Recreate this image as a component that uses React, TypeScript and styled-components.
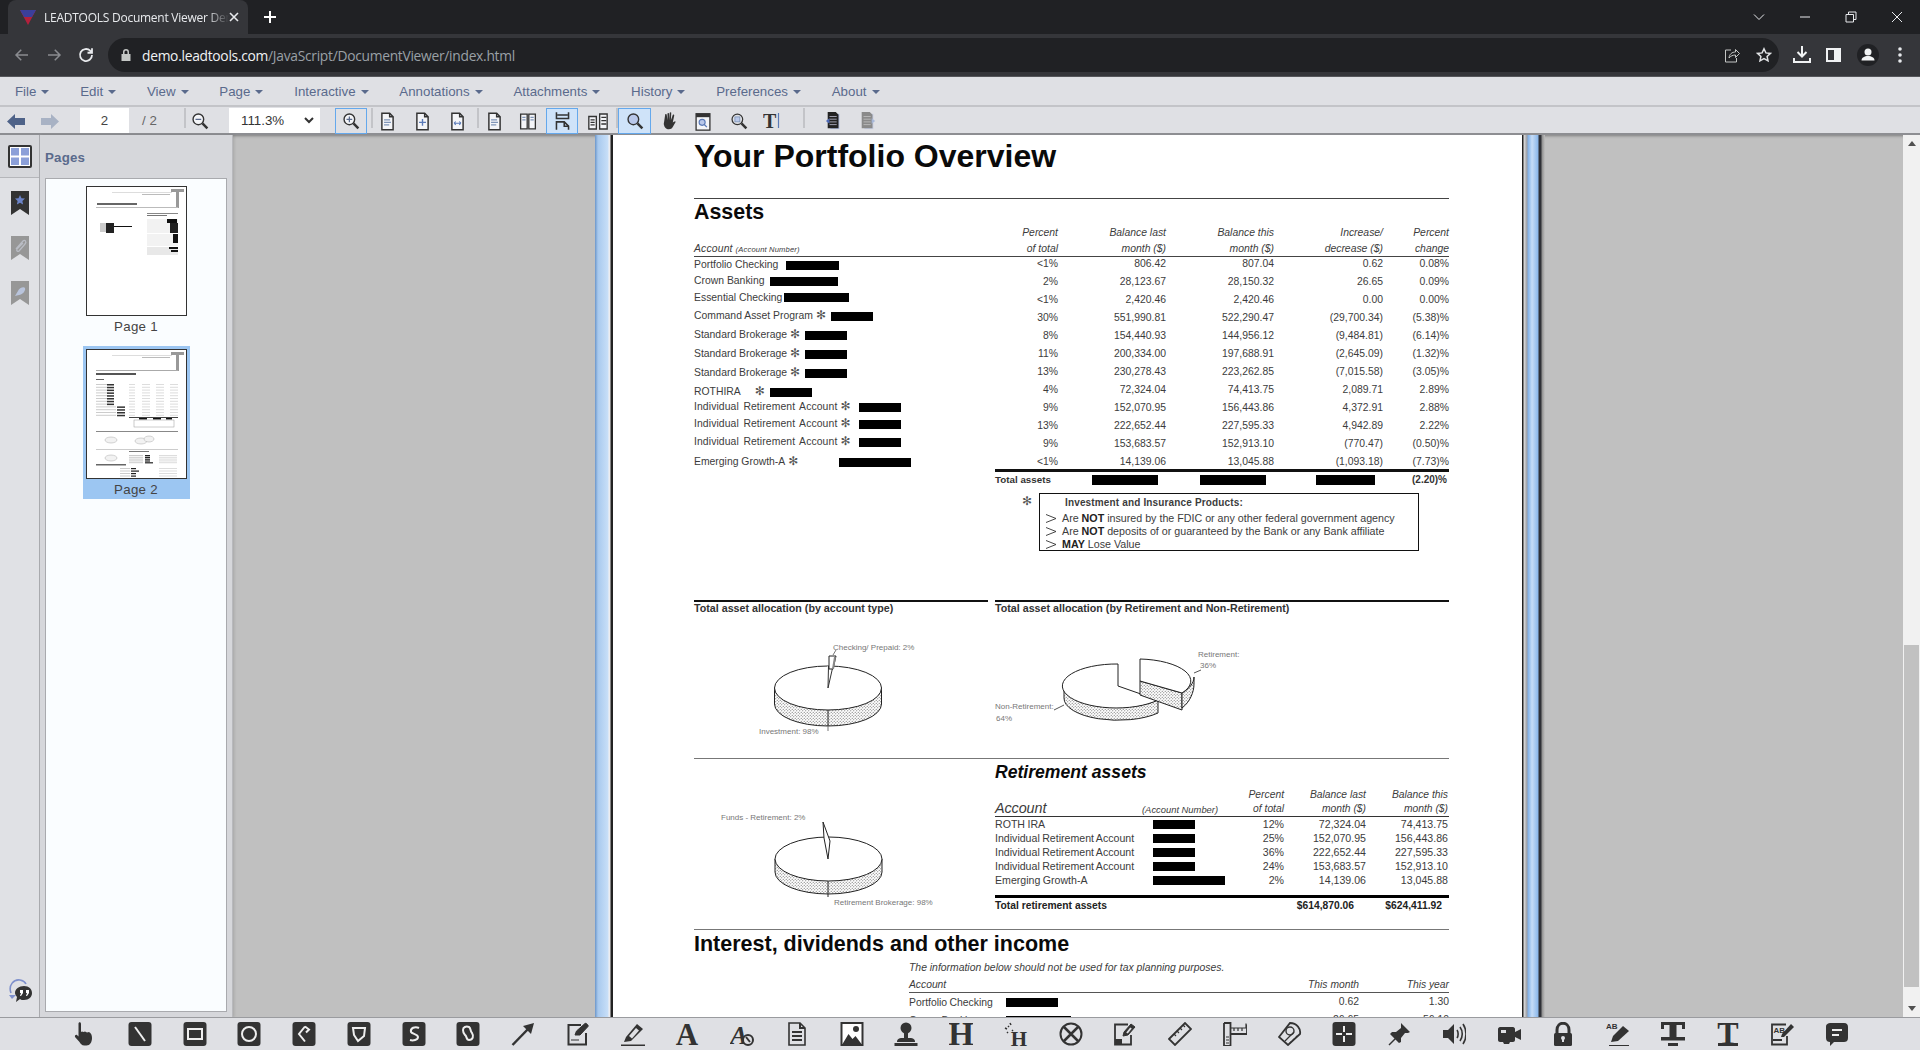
import React from 'react';
import styled, { createGlobalStyle } from 'styled-components';

const Global = createGlobalStyle`
  html, body { margin: 0; padding: 0; height: 1050px; overflow: hidden; background: #c0c0c0; }
  #root { height: 1050px; }
  * { box-sizing: border-box; }
`;

const AppRoot = styled.div`
  width: 1920px; height: 1050px; display: flex; flex-direction: column;
  font-family: "Liberation Sans", Arial, sans-serif; overflow: hidden;
`;

/* ---------- browser chrome ---------- */
const TabStrip = styled.div`
  height: 34px; background: #202124; display: flex; align-items: stretch; padding-left: 8px;
`;
const Tab = styled.div`
  width: 240px; background: #35363a; border-radius: 8px 8px 0 0; display: flex; align-items: center;
  padding: 0 9px 0 12px; color: #e8eaed;
`;
const TabTitle = styled.span`
  flex: 1; margin-left: 8px; font: 12px "Open Sans", sans-serif; letter-spacing: -0.25px; white-space: nowrap; overflow: hidden;
  -webkit-mask-image: linear-gradient(90deg, #000 88%, transparent);
  mask-image: linear-gradient(90deg, #000 88%, transparent);
`;
const NewTab = styled.div`
  margin-left: 15px; width: 16px; display: flex; align-items: center; color: #fff;
`;
const WindowControls = styled.div`
  margin-left: auto; display: flex; align-items: center; color: #e8eaed; padding-right: 15px; gap: 30px;
`;
const NavBar = styled.div`
  height: 42px; background: #35363a; display: flex; align-items: center; padding: 0 0 0 12px;
`;
const NavBtn = styled.div<{ $dim?: boolean; $ml?: number }>`
  width: 20px; height: 20px; margin-left: ${p => p.$ml ?? 0}px; color: ${p => (p.$dim ? '#8a8c90' : '#e8eaed')};
  display: flex; align-items: center; justify-content: center; flex: none;
`;
const Omnibox = styled.div`
  margin-left: 12px; width: 1671px; height: 34px; border-radius: 17px; background: #202124; display: flex; align-items: center;
  padding: 0 7px 0 12px; color: #e8eaed; flex: none;
`;
const Url = styled.span`
  margin-left: 10px; font: 13.8px "Open Sans", sans-serif; letter-spacing: -0.28px; color: #f1f3f4; white-space: nowrap;
  span { color: #9aa0a6; }
`;
const OmniActions = styled.div`
  margin-left: auto; display: flex; align-items: center; gap: 16px; color: #c4c7c5;
`;
const Actions = styled.div`
  margin-left: 13px; display: flex; align-items: center; gap: 12px; color: #f1f3f4;
`;

/* ---------- app menu + tools ---------- */
const MenuBar = styled.div`
  height: 31px; background: #dfe0e4; border-top: 1px solid #55565a; border-bottom: 2px solid #c3c4c8;
  display: flex; align-items: center; padding: 0 0 0 15px; gap: 30.8px;
`;
const MenuItem = styled.div`
  font-size: 13.3px; color: #5a6a8c; display: flex; align-items: center; gap: 5px;
`;
const Caret = styled.i`
  width: 0; height: 0; border-left: 4px solid transparent; border-right: 4px solid transparent; border-top: 4px solid #5a6a8c; margin-top: 2px;
`;
const ToolBar = styled.div`
  height: 28px; background: #dfe0e4; border-bottom: 2px solid #8d8e92; display: flex; align-items: flex-start; padding-top: 1px;
`;
const Tool = styled.div<{ $ml?: number; $w?: number; $on?: boolean; $flat?: boolean }>`
  flex: none; width: ${p => p.$w ?? 28}px; height: 26px; margin-left: ${p => p.$ml ?? 0}px;
  display: flex; align-items: center; justify-content: center;
  border: 1px solid ${p => (p.$on || p.$flat ? '#64a8ec' : 'transparent')};
  background: ${p => (p.$on ? '#cfe3f9' : 'transparent')};
`;
const ToolSep = styled.div<{ $ml?: number }>`
  flex: none; width: 2px; height: 20px; margin-left: ${p => p.$ml ?? 0}px; background: #c3c4c8;
`;
const PageInput = styled.div`
  flex: none; margin-left: 14px; width: 49px; height: 25px; background: #fff; display: flex; align-items: center; justify-content: center;
  font-size: 13.3px; color: #444;
`;
const PageCount = styled.div`
  flex: none; margin-left: 13px; width: 20px; height: 25px; line-height: 25px; font-size: 13.3px; color: #666; white-space: nowrap;
`;
const ZoomSelect = styled.div`
  flex: none; margin-left: 15px; width: 91px; height: 25px; background: #fff; display: flex; align-items: center; justify-content: space-between;
  padding: 0 6px 0 12px; font-size: 13.3px; color: #333;
`;

/* ---------- main ---------- */
const Main = styled.div`
  height: 882px; display: flex; background: #c0c0c0; flex: none;
`;
const Rail = styled.div`
  width: 40px; flex: none; background: #e0e1e5; border-right: 1px solid #a9aaae; display: flex; flex-direction: column; align-items: center;
`;
const RailActive = styled.div`
  width: 39px; height: 43px; background: #d6d7db; border-bottom: 1px solid #b5b6ba; display: flex; align-items: center; justify-content: center;
`;
const RailIcon = styled.div<{ $mt: number }>`
  margin-top: ${p => p.$mt}px; display: flex;
`;
const RailFoot = styled.div`
  margin-top: auto; margin-bottom: 14px; display: flex;
`;
const Panel = styled.div`
  width: 193px; flex: none; background: #d6d7db; border-right: 1px solid #b8b9bd; display: flex; flex-direction: column; padding: 0 5px 5px 5px;
  box-shadow: 2px 0 2px rgba(0,0,0,.08);
`;
const PanelTitle = styled.div`
  height: 43px; line-height: 45px; font-size: 13.3px; font-weight: bold; color: #5a6a8c; letter-spacing: .2px;
`;
const ThumbList = styled.div`
  flex: 1; background: #fafdff; border: 1px solid #a9aaae; display: flex; flex-direction: column; align-items: center; padding-top: 7px;
`;
const ThumbCard = styled.div<{ $on?: boolean; $mt?: number }>`
  width: 107px; margin-top: ${p => p.$mt ?? 0}px; padding-top: ${p => (p.$on ? 3 : 0)}px; height: ${p => (p.$on ? 153 : 154)}px;
  background: ${p => (p.$on ? '#9cc6f2' : 'transparent')}; display: flex; flex-direction: column; align-items: center;
`;
const ThumbFrame = styled.div`
  width: 101px; height: 130px; background: #fff; border: 1px solid #333; display: flex;
`;
const ThumbLabel = styled.div`
  font-size: 13.3px; letter-spacing: .3px; color: #444; line-height: 22px;
`;

const Viewer = styled.div`
  flex: 1; display: flex; overflow: hidden; padding-left: 362px; position: relative; box-shadow: inset 0 3px 3px -2px rgba(0,0,0,.35);
`;
const EdgeLeft = styled.div`
  width: 18px; flex: none; background: linear-gradient(90deg, #6c96c9 0, #a8c9ee 3px, #c8dff8 13px, #f0f0f4 14px, #e8e8ea 15px, #222 16px, #222 18px);
`;
const EdgeRight = styled.div`
  width: 23px; flex: none; background: linear-gradient(90deg, #222 0, #222 1px, #ddd 2px, #9a9da4 5px, #7fb0e8 6px, #c6ddf7 10px, #8bb7ea 16px, #2f3137 17px, #2f3137 19px, #8f8f8f 20px, #c0c0c0 23px);
`;
const PageSheet = styled.div`
  width: 909px; flex: none; background: #fff; overflow: hidden; padding-left: 81px; color: #3c3c3c; font-size: 10.4px;
`;
const Doc = styled.div`
  width: 755px;
`;
const Title = styled.h1`
  margin: 4px 0 0; font-size: 32px; line-height: 34px; font-weight: bold; color: #0a0a0a;
`;
const Rule = styled.div<{ $mt?: number; $h?: number; $c?: string }>`
  margin-top: ${p => p.$mt ?? 0}px; height: ${p => p.$h ?? 1}px; background: ${p => p.$c ?? '#444'};
`;
const Heading = styled.h2`
  margin: 1px 0 0; font-size: 21.4px; line-height: 24px; font-weight: bold; color: #0a0a0a; height: 25px;
`;
const COLS = '63px 108px 108px 109px 66px';
const HeadRow = styled.div`
  display: grid; grid-template-columns: 301px ${COLS}; font-style: italic; line-height: 16px; border-bottom: 1px solid #444; height: 32px;
`;
const HeadAccount = styled.div`
  align-self: end; line-height: 14px; font-size: 10.4px; letter-spacing: .15px; span { font-size: 7.6px; margin-left: 3px; }
`;
const HeadCol = styled.div`
  text-align: right;
`;
const AssetsBody = styled.div`
  display: flex;
`;
const AccountList = styled.div`
  width: 301px; flex: none;
`;
const AccountRow = styled.div<{ $mt: number }>`
  display: flex; height: 14px; line-height: 14px; margin-top: ${p => p.$mt}px; white-space: nowrap;
`;
const AccountName = styled.div<{ $w: number; $wide?: boolean }>`
  width: ${p => p.$w}px; flex: none; word-spacing: ${p => (p.$wide ? 1.5 : 0)}px; letter-spacing: ${p => (p.$wide ? 0.1 : 0)}px;
`;
const Star = styled.span<{ $ml?: number }>`
  font-family: "DejaVu Sans", sans-serif; font-size: 12px; line-height: 12px; color: #555; margin-left: ${p => p.$ml ?? 3}px;
`;
const Redact = styled.div<{ $w: number }>`
  width: ${p => p.$w}px; height: 9px; background: #000; flex: none; align-self: center;
`;
const NumbersCol = styled.div`
  flex: 1;
`;
const NumGrid = styled.div`
  display: grid; grid-template-columns: ${COLS}; row-gap: 4px; line-height: 14px; text-align: right;
`;
const TotalRow = styled.div`
  display: grid; grid-template-columns: ${COLS}; height: 16px; line-height: 16px; font-weight: bold; font-size: 9.8px; color: #333; align-items: center; white-space: nowrap;
`;
const TotalBar = styled.div<{ $w: number }>`
  width: ${p => p.$w}px; height: 10px; background: #000; justify-self: end; margin-right: 8px;
`;
const TotalPct = styled.div`
  text-align: right; padding-right: 2px; font-size: 10px;
`;
const NoteWrap = styled.div`
  display: flex; margin-top: 5px;
`;
const NoteStar = styled.div`
  width: 44px; padding: 2px 0 0 27px; font-family: "DejaVu Sans", sans-serif; font-size: 12px; color: #555; line-height: 12px; flex: none;
`;
const NoteBox = styled.div`
  width: 380px; height: 58px; border: 1px solid #111; padding: 3px 0 0 6px; font-size: 10.7px;
`;
const NoteTitle = styled.div`
  font-weight: bold; font-size: 10px; line-height: 12px; padding-left: 19px; margin-bottom: 3px; letter-spacing: .15px;
`;
const NoteLine = styled.div`
  display: flex; line-height: 13px; white-space: nowrap; b { color: #222; }
  svg { margin-right: 5px; flex: none; align-self: center; }
`;
const AllocRow = styled.div`
  display: flex; gap: 7px; margin-top: 49px;
`;
const AllocCol = styled.div<{ $w: number }>`
  width: ${p => p.$w}px; border-top: 2px solid #111;
`;
const AllocTitle = styled.div`
  font-weight: bold; font-size: 10.7px; line-height: 13px; height: 18px; color: #333;
`;
const ChartSvg = styled.svg`
  display: block;
`;
const RetireRow = styled.div`
  display: flex;
`;
const RetireChart = styled.div`
  width: 301px; flex: none; padding-top: 40px;
`;
const RetireBody = styled.div`
  flex: 1;
`;
const RetireTitle = styled.h3`
  margin: 2px 0 0; height: 27px; line-height: 22px; font-size: 17.6px; font-style: italic; font-weight: bold; color: #0a0a0a;
`;
const RCOLS = '158px 90px 41px 82px 82px';
const RetireHead = styled.div`
  display: grid; grid-template-columns: ${RCOLS}; height: 28px; line-height: 14px; font-style: italic; font-size: 10.3px; border-bottom: 1px solid #333; box-sizing: content-box;
`;
const BigAccount = styled.div`
  align-self: end; font-size: 14.4px; line-height: 15px; letter-spacing: -.1px;
`;
const AcctNo = styled.div`
  align-self: end; font-size: 9.4px; line-height: 13px; white-space: nowrap; margin-left: -11px;
`;
const RetireGrid = styled.div`
  display: grid; grid-template-columns: ${RCOLS}; line-height: 14px; font-size: 10.6px; align-items: center; white-space: nowrap;
`;
const Cell = styled.div`
  text-align: right;
`;
const LeftCell = styled.div`
  word-spacing: -.5px;
`;
const RetireTotal = styled.div`
  display: grid; grid-template-columns: 288px 71px 88px; font-weight: bold; font-size: 10.3px; line-height: 16px; height: 16px; white-space: nowrap; color: #222;
`;
const IncomeTitle = styled.h2`
  margin: 1px 0 0; font-size: 21.5px; line-height: 26px; height: 26px; font-weight: bold; color: #0a0a0a;
`;
const IncomeBlock = styled.div`
  margin-left: 215px;
`;
const IncomeNote = styled.div`
  margin-top: 5px; line-height: 12px; font-style: italic; font-size: 10.4px; white-space: nowrap;
`;
const IncomeHead = styled.div`
  margin-top: 4px; display: grid; grid-template-columns: 1fr 92px 90px; height: 15px; line-height: 14px; font-style: italic; font-size: 10.3px; border-bottom: 1px solid #555; text-align: right;
  div:first-child { text-align: left; }
`;
const IncomeRow = styled.div`
  display: grid; grid-template-columns: 1fr 92px 90px; line-height: 16px; height: 17px; font-size: 10.4px; margin-top: 1px; text-align: right;
`;
const IncomeName = styled.div`
  display: flex; text-align: left; word-spacing: -.5px; align-items: center; gap: 0;
`;
const IncomeLabel = styled.span`
  width: 97px; flex: none;
`;

const Scrollbar = styled.div`
  position: absolute; right: 0; top: 0; bottom: 0; width: 17px; background: #f1f1f1; display: flex; flex-direction: column; align-items: center; padding-top: 510px;
`;
const ScrollThumb = styled.div`
  width: 15px; height: 342px; background: #c1c1c1; flex: none;
`;
const ArrowUp = styled.i`
  position: absolute; top: 6px; width: 0; height: 0; border-left: 4px solid transparent; border-right: 4px solid transparent; border-bottom: 5px solid #505050;
`;
const ArrowDown = styled.i`
  position: absolute; bottom: 6px; width: 0; height: 0; border-left: 4px solid transparent; border-right: 4px solid transparent; border-top: 5px solid #505050;
`;
const BottomBar = styled.div`
  flex: 1; background: #dfe0e4; border-top: 1px solid #9a9b9f; display: flex; align-items: center; padding-left: 73px; gap: 30.75px;
`;
const BottomIcon = styled.svg`
  width: 24px; height: 24px; flex: none; display: block;
`;

/* ---------- icons ---------- */
const D = '#333';
const Svg = ({ s = 18, w, children }: { s?: number; w?: number; children: React.ReactNode }) => (
  <svg width={w ?? s} height={s} viewBox="0 0 24 24" fill="none" stroke="currentColor" strokeWidth={2}>{children}</svg>
);
const Bi = ({ children }: { children: React.ReactNode }) => (
  <BottomIcon viewBox="0 0 24 24" fill="none" stroke={D} strokeWidth={2}>{children}</BottomIcon>
);
const Sq = ({ children }: { children: React.ReactNode }) => (
  <Bi><rect x="0.5" y="0" width="23" height="24" rx="3" fill={D} stroke="none" />{children}</Bi>
);
const W = { stroke: '#eee', strokeWidth: 2, fill: 'none' };

const bottomIcons = [
  <Bi><path d="M6 0.5c1-.5 2 0 2 1.5v8l1-.5 1.500.5 1.500-.5 2 1 2-.5c2 1 3 3 3 6 0 4-2 7.500-5.500 7.500h-2c-3 0-4-2-5-3.500L2 15c-.5-1.500 1-2.500 2-2l1.500 1.500V1.500c0-.5.200-.8.500-1z" fill={D} stroke="none" /></Bi>,
  <Sq><path d="M7 5l10 14" {...W} /></Sq>,
  <Sq><rect x="5" y="7" width="14" height="10" {...W} /></Sq>,
  <Sq><circle cx="12" cy="12" r="7" {...W} /></Sq>,
  <Sq><path d="M13 4.500L7 12l6 7.500M13 4.500l4 3-3 3" {...W} /></Sq>,
  <Sq><path d="M6 6h12l-1 8-6 5-4-6z" {...W} /></Sq>,
  <Sq><path d="M17 6c-4-2-9 0-8 4 1 2 7 2 7 5 0 3-5 4-8 3" {...W} /></Sq>,
  <Sq><path d="M7 8c0-3 3-4 6-3 2 1 1 4 3 6 2 3 1 7-3 7-3 0-2-4-4-5-1-1-2-3-2-5z" {...W} /></Sq>,
  <Bi><path d="M1.500 23L19 5" strokeWidth={2.5} /><path d="M12 4l11-3-3 11z" fill={D} stroke="none" /></Bi>,
  <Bi><path d="M15 3H2.500v19.500H20V11" /><path d="M9 13l1.500-4L19 1.500c1-.8 4 2 3 3L14 13zM5 18h8" fill={D} strokeWidth={1} /></Bi>,
  <Bi><path d="M0 23.500h24" strokeWidth={2} /><path d="M3 20l2-5L16 2l6 5-12 12z" fill={D} stroke="none" /><path d="M8 14l7-8 3 2.500-7 8z" fill="#dfe0e4" stroke="none" /></Bi>,
  <Bi><text x="12" y="23" textAnchor="middle" fontFamily='"Liberation Serif", serif' fontWeight="bold" fontSize="31" fill={D} stroke="none">A</text></Bi>,
  <Bi><text x="9" y="22" textAnchor="middle" fontFamily='"Liberation Serif", serif' fontStyle="italic" fontWeight="bold" fontSize="26" fill={D} stroke="none">A</text><circle cx="18" cy="18" r="5" fill="#dfe0e4" /><path d="M16 15l4 5" /></Bi>,
  <Bi><path d="M4 1h11l5 5v17H4z" strokeWidth={1.600} /><path d="M15 1v5h5M7 10h10M7 14h10M7 18h10" strokeWidth={2} /></Bi>,
  <Bi><rect x="0.500" y="0" width="23" height="24" fill={D} stroke="none" /><rect x="2.500" y="2" width="19" height="20" fill="#fff" stroke="none" /><path d="M2.500 22l6-10 4 5 3-3 6 8z" fill={D} stroke="none" /><circle cx="16" cy="7" r="3" fill={D} stroke="none" /></Bi>,
  <Bi><circle cx="12" cy="6" r="5.500" fill={D} stroke="none" /><path d="M10 10h4v7h-4z" fill={D} stroke="none" /><path d="M3 20c0-3 2-4 5-4h8c3 0 5 1 5 4z" fill={D} stroke="none" /><rect x="0.500" y="21" width="23" height="3" fill={D} stroke="none" /></Bi>,
  <Bi><text x="12" y="23" textAnchor="middle" fontFamily='"Liberation Serif", serif' fontWeight="bold" fontSize="33" fill={D} stroke="none">H</text></Bi>,
  <Bi><text x="15" y="24" textAnchor="middle" fontFamily='"Liberation Serif", serif' fontWeight="bold" fontSize="21" fill={D} stroke="none">H</text><path d="M1 6l2 1M6 1l1 2M4 4l1 1M3 11l1-1M8 8l1 1" strokeWidth={1.500} /></Bi>,
  <Bi><circle cx="12" cy="12" r="10.500" strokeWidth={2} /><path d="M5 5l14 14M19 5L5 19" strokeWidth={2.500} /></Bi>,
  <Bi><path d="M15 2.500H2v20h16V13" strokeWidth={1.800} /><path d="M10 14l1-4L18 2l4 3-7 8z" fill={D} strokeWidth={1} /><rect x="2" y="17" width="7" height="5" fill={D} stroke="none" /><path d="M14 11l4-5" stroke="#dfe0e4" strokeWidth={2} /></Bi>,
  <Bi><path d="M1 17L17 1l6 6L7 23z" strokeWidth={1.800} /><path d="M6 12l2 2M9 9l2 2M12 6l2 2M15 3l2 2" strokeWidth={1.200} /></Bi>,
  <Bi><path d="M1 1h6.500v11H24V2.500 8M1 1v23h6.500V12" strokeWidth={1.800} /><path d="M7.500 6H23V1.500M11 6v3M15 6v3M19 6v3M3 15h3M3 18h3M3 21h3" strokeWidth={1.200} /></Bi>,
  <Bi><path d="M1 15L12 1c7 0 11 6 10 11L10 23z" strokeWidth={1.800} /><circle cx="12" cy="9" r="4" strokeWidth={1.400} /><path d="M7 19l9-9M12 21l1-1M15 18l1-1M18 15l1-1" strokeWidth={1.200} /></Bi>,
  <Sq><path d="M12 4v6M12 14v6M4 12h6M14 12h6" {...W} /></Sq>,
  <Bi><path d="M2 23l7-7" strokeWidth={1.500} /><path d="M14 1l9 9-2 1-3 0-4 5 0 4-2 1-9-9 2-2h4l5-4V3z" fill={D} stroke="none" /></Bi>,
  <Bi><path d="M1 8h5l6-6v20l-6-6H1z" fill={D} stroke="none" /><path d="M15 8c1.500 2 1.500 6 0 8M18 5c3 4 3 10 0 14M21 2c4 6 4 14 0 20" strokeWidth={1.600} /></Bi>,
  <Bi><path d="M1 7c0-1 1-2 2-2h13c1 0 2 1 2 2v3l6-3v11l-6-3v3c0 1-1 2-2 2h-3l-1 2H7l-1-2H3c-1 0-2-1-2-2z" fill={D} stroke="none" /><rect x="4" y="8" width="5" height="3" fill="#dfe0e4" stroke="none" /></Bi>,
  <Bi><path d="M6 12V8c0-9 12-9 12 0v4" strokeWidth={3} /><rect x="3" y="11" width="18" height="13" rx="1.500" fill={D} stroke="none" /><circle cx="12" cy="16" r="2" fill="#dfe0e4" stroke="none" /><path d="M12 17v3" stroke="#dfe0e4" /></Bi>,
  <Bi><text x="0" y="7" fontFamily='"Liberation Sans", sans-serif' fontWeight="bold" fontSize="8" fill={D} stroke="none">AB</text><path d="M3 24h20" /><path d="M5 20l2-6L17 4l6 5-11 10z" fill={D} stroke="none" /></Bi>,
  <Bi><rect x="0" y="0" width="24" height="3" fill={D} stroke="none" /><rect x="0" y="0" width="3" height="7" fill={D} stroke="none" /><rect x="21" y="0" width="3" height="7" fill={D} stroke="none" /><rect x="8.500" y="0" width="7" height="17" fill={D} stroke="none" /><rect x="0" y="15" width="24" height="3.500" fill={D} stroke="none" /><rect x="7" y="21" width="10" height="3" fill={D} stroke="none" /></Bi>,
  <Bi><text x="12" y="22" textAnchor="middle" fontFamily='"Liberation Serif", serif' fontWeight="bold" fontSize="32" fill={D} stroke="none">T</text><rect x="2" y="21" width="20" height="3" fill={D} stroke="none" /></Bi>,
  <Bi><path d="M16 2.500H2v20h15V14" strokeWidth={1.800} /><text x="3.500" y="11" fontFamily='"Liberation Sans", sans-serif' fontWeight="bold" fontSize="8" fill={D} stroke="none">AB</text><path d="M11 15l1-3 9-10 3 3-10 10z" fill={D} stroke="none" /><path d="M3 17h9v2H3z" fill={D} stroke="none" /></Bi>,
  <Bi><path d="M6 1h13c3 0 4 2 4 4v11c0 3-2 4-4 4H9l-4 4v-4c-2 0-4-1-4-4V5c0-3 2-4 5-4z" fill={D} stroke="none" /><path d="M7 8h10M7 13h7" stroke="#eee" strokeWidth={2} /></Bi>,
];

const PageIcon = ({ children, s = 19 }: { children?: React.ReactNode; s?: number }) => (
  <svg width={s} height={s} viewBox="0 0 22 22" fill="none" stroke="#333" strokeWidth={1.700}>
    <path d="M4.500 1.500h9l4 4v15h-13z" fill="#f4f5f8" />
    <path d="M13.500 1.500v4h4" />
    {children}
  </svg>
);
const Lines = <path d="M7 9h7M7 12h8M7 15h6" stroke="#7f95b8" strokeWidth={1.500} />;

const ZoomGlass = ({ sign, blue }: { sign?: 'plus' | 'minus'; blue?: boolean }) => (
  <svg width={18} height={18} viewBox="0 0 22 22" fill="none" stroke="#333">
    <circle cx="9" cy="9" r="6.500" strokeWidth={1.700} fill={blue ? '#b9c8ea' : '#f4f5f8'} />
    <path d="M14 14l6 6" strokeWidth={3} />
    {sign && <path d="M5.500 9h7" stroke="#5a6a8c" strokeWidth={1.500} />}
    {sign === 'plus' && <path d="M9 5.500v7" stroke="#5a6a8c" strokeWidth={1.500} />}
  </svg>
);

const Dots = ({ id }: { id: string }) => (
  <defs>
    <pattern id={id} width="3" height="3" patternUnits="userSpaceOnUse">
      <rect width="3" height="3" fill="#fff" />
      <circle cx=".75" cy=".75" r=".6" fill="#666" />
      <circle cx="2.250" cy="2.250" r=".6" fill="#666" />
    </pattern>
  </defs>
);
const Lbl = styled.text`
  font: 8px "Liberation Sans", sans-serif; fill: #777;
`;

const ThumbOne = () => (
  <svg width="99" height="128" viewBox="0 0 99 128">
    <rect x="25" y="5" width="60" height="1" fill="#ddd" />
    <path d="M84 2h13v3h-5v16h-3V5h-5z" fill="#999" />
    <rect x="55" y="7" width="28" height="1" fill="#bbb" />
    <rect x="10" y="16" width="40" height="2" fill="#666" />
    <rect x="9" y="20" width="82" height="1" fill="#bbb" />
    <rect x="60" y="26" width="31" height="1" fill="#888" />
    <rect x="60" y="28" width="20" height="1" fill="#777" />
    <rect x="60" y="32" width="31" height="14" fill="#f2f2f2" />
    <rect x="80" y="32" width="10" height="4" fill="#111" /><rect x="83" y="36" width="8" height="10" fill="#222" />
    <rect x="60" y="47" width="31" height="12" fill="#f2f2f2" />
    <rect x="86" y="47" width="5" height="9" fill="#111" />
    <rect x="60" y="60" width="31" height="8" fill="#e8e8e8" />
    <rect x="82" y="60" width="9" height="2" fill="#111" /><rect x="84" y="63" width="7" height="2" fill="#111" />
    <rect x="13" y="36" width="8" height="9" fill="#ccc" />
    <rect x="19" y="36" width="8" height="10" fill="#222" />
    <rect x="27" y="39" width="18" height="1" fill="#111" />
  </svg>
);
const ThumbTwo = () => (
  <svg width="99" height="128" viewBox="0 0 99 128">
    <rect x="25" y="5" width="60" height="1" fill="#ddd" />
    <path d="M84 2h13v3h-5v16h-3V5h-5z" fill="#999" />
    <rect x="55" y="7" width="28" height="1" fill="#bbb" />
    <rect x="9" y="20" width="82" height="1" fill="#aaa" />
    <rect x="9" y="23" width="40" height="2" fill="#555" />
    <rect x="9" y="29" width="8" height="1" fill="#666" />
    {[0, 1, 2, 3, 4, 5, 6, 7, 8, 9, 10, 11].map(i => (
      <g key={i}>
        <rect x="9" y={34 + i * 2.800} width={i > 7 ? 20 : 13} height="1" fill="#ccc" />
        <rect x={i > 7 ? 30 : 20} y={34 + i * 2.800} width={i > 7 ? 8 : 7} height="1.500" fill="#333" />
        <rect x="42" y={34 + i * 2.800} width="6" height="1" fill="#ddd" />
        <rect x="55" y={34 + i * 2.800} width="8" height="1" fill="#ddd" />
        <rect x="69" y={34 + i * 2.800} width="8" height="1" fill="#ddd" />
        <rect x="83" y={34 + i * 2.800} width="8" height="1" fill="#ddd" />
      </g>
    ))}
    <rect x="42" y="67" width="49" height="1" fill="#444" />
    <rect x="52" y="68" width="8" height="1.500" fill="#111" /><rect x="66" y="68" width="8" height="1.500" fill="#111" /><rect x="79" y="68" width="6" height="1.500" fill="#111" />
    <rect x="47" y="70" width="40" height="7" fill="#fff" stroke="#999" strokeWidth=".5" />
    <rect x="9" y="81" width="39" height="1" fill="#888" /><rect x="42" y="81" width="49" height="1" fill="#888" />
    <ellipse cx="24" cy="90" rx="6" ry="3" fill="#f2f2f2" stroke="#aaa" strokeWidth=".5" />
    <ellipse cx="54" cy="91" rx="6" ry="3" fill="#f2f2f2" stroke="#aaa" strokeWidth=".5" />
    <ellipse cx="62" cy="89" rx="5" ry="3" fill="#f2f2f2" stroke="#aaa" strokeWidth=".5" />
    <rect x="9" y="99" width="82" height="1" fill="#ccc" />
    <rect x="42" y="101" width="20" height="1" fill="#777" />
    <ellipse cx="24" cy="108" rx="6" ry="3" fill="#f2f2f2" stroke="#aaa" strokeWidth=".5" />
    {[0, 1, 2, 3, 4].map(i => (
      <g key={i}>
        <rect x="42" y={105 + i * 1.800} width="14" height="1" fill="#ccc" />
        <rect x="58" y={105 + i * 1.800} width={i === 4 ? 8 : 5} height="1.200" fill="#222" />
        <rect x="72" y={105 + i * 1.800} width="18" height="1" fill="#ddd" />
      </g>
    ))}
    <rect x="9" y="114" width="30" height="1.500" fill="#666" />
    {[0, 1, 2, 3].map(i => (
      <g key={i}>
        <rect x="33" y={118 + i * 2.500} width="10" height="1" fill="#ccc" />
        <rect x="44" y={118 + i * 2.500} width={i === 1 ? 8 : 5} height="1.200" fill="#222" />
        <rect x="72" y={118 + i * 2.500} width="18" height="1" fill="#ddd" />
      </g>
    ))}
  </svg>
);

const menus = ['File', 'Edit', 'View', 'Page', 'Interactive', 'Annotations', 'Attachments', 'History', 'Preferences', 'About'];

const accounts: { name: string; star?: boolean; w: number; bar: number; mt: number; wide?: boolean; ml?: number }[] = [
  { name: 'Portfolio Checking', w: 92, bar: 53, mt: 1 },
  { name: 'Crown Banking', w: 76, bar: 68, mt: 2.400 },
  { name: 'Essential Checking', w: 89.500, bar: 65, mt: 2.600 },
  { name: 'Command Asset Program', star: true, w: 137, bar: 42, mt: 4.400 },
  { name: 'Standard Brokerage', star: true, w: 111, bar: 42, mt: 5 },
  { name: 'Standard Brokerage', star: true, w: 111, bar: 42, mt: 5 },
  { name: 'Standard Brokerage', star: true, w: 111, bar: 42, mt: 5 },
  { name: 'ROTHIRA', star: true, w: 76, bar: 42, mt: 5, ml: 14 },
  { name: 'Individual Retirement Account', star: true, w: 165, bar: 42, mt: 1, wide: true },
  { name: 'Individual Retirement Account', star: true, w: 165, bar: 42, mt: 3, wide: true },
  { name: 'Individual Retirement Account', star: true, w: 165, bar: 42, mt: 4, wide: true },
  { name: 'Emerging Growth-A', star: true, w: 145, bar: 72, mt: 6 },
];

const numbers = [
  ['<1%', '806.42', '807.04', '0.62', '0.08%'],
  ['2%', '28,123.67', '28,150.32', '26.65', '0.09%'],
  ['<1%', '2,420.46', '2,420.46', '0.00', '0.00%'],
  ['30%', '551,990.81', '522,290.47', '(29,700.34)', '(5.38)%'],
  ['8%', '154,440.93', '144,956.12', '(9,484.81)', '(6.14)%'],
  ['11%', '200,334.00', '197,688.91', '(2,645.09)', '(1.32)%'],
  ['13%', '230,278.43', '223,262.85', '(7,015.58)', '(3.05)%'],
  ['4%', '72,324.04', '74,413.75', '2,089.71', '2.89%'],
  ['9%', '152,070.95', '156,443.86', '4,372.91', '2.88%'],
  ['13%', '222,652.44', '227,595.33', '4,942.89', '2.22%'],
  ['9%', '153,683.57', '152,913.10', '(770.47)', '(0.50)%'],
  ['<1%', '14,139.06', '13,045.88', '(1,093.18)', '(7.73)%'],
];

const retire = [
  ['ROTH  IRA', 42, '12%', '72,324.04', '74,413.75'],
  ['Individual Retirement Account', 42, '25%', '152,070.95', '156,443.86'],
  ['Individual Retirement Account', 42, '36%', '222,652.44', '227,595.33'],
  ['Individual Retirement Account', 42, '24%', '153,683.57', '152,913.10'],
  ['Emerging Growth-A', 72, '2%', '14,139.06', '13,045.88'],
] as const;

const Chevron = () => (<svg width="10" height="7" viewBox="0 0 10 7" fill="none" stroke="#333" strokeWidth="2"><path d="M1 1l4 4 4-4" /></svg>);
const Gt = () => (<svg width="11" height="9" viewBox="0 0 11 9" fill="none" stroke="#333" strokeWidth=".9"><path d="M0 .5l10 4-10 4" /></svg>);

export default function App() {
  return (
    <AppRoot>
      <Global />
      <TabStrip>
        <Tab>
          <svg width="16" height="16" viewBox="0 0 16 16">
            <path d="M0 1h16L8 16z" fill="#b3203c" />
            <path d="M0 1h16l-4 7H4z" fill="#3b3f9a" />
          </svg>
          <TabTitle>LEADTOOLS Document Viewer Demo</TabTitle>
          <svg width="10" height="10" viewBox="0 0 10 10" stroke="#e8eaed" strokeWidth="1.600"><path d="M1 1l8 8M9 1L1 9" /></svg>
        </Tab>
        <NewTab>
          <svg width="14" height="14" viewBox="0 0 14 14" stroke="#fff" strokeWidth="2"><path d="M7 1v12M1 7h12" /></svg>
        </NewTab>
        <WindowControls>
          <svg width="16" height="16" viewBox="0 0 16 16" fill="none" stroke="#e8eaed"><path d="M3 5.500l5 5 5-5" /></svg>
          <svg width="16" height="16" viewBox="0 0 16 16" stroke="#e8eaed"><path d="M3 8h10" /></svg>
          <svg width="16" height="16" viewBox="0 0 16 16" fill="none" stroke="#e8eaed"><path d="M3 5.500h7.500V13H3zM5.500 5.500V3H13v7.500h-2.500" /></svg>
          <svg width="16" height="16" viewBox="0 0 16 16" stroke="#e8eaed"><path d="M3 3l10 10M13 3L3 13" /></svg>
        </WindowControls>
      </TabStrip>
      <NavBar>
        <NavBtn $dim><Svg s={18}><path d="M20 12H5M11 5l-7 7 7 7" /></Svg></NavBtn>
        <NavBtn $dim $ml={12}><Svg s={18}><path d="M4 12h15M13 5l7 7-7 7" /></Svg></NavBtn>
        <NavBtn $ml={12}><Svg s={18}><path d="M20 12a8 8 0 1 1-2.400-5.700L20 8.500M20 3v6h-6" strokeWidth={2.400} /></Svg></NavBtn>
        <Omnibox>
          <svg width="12" height="14" viewBox="0 0 12 14" fill="#c4c7c5"><path d="M3 6V4a3 3 0 0 1 6 0v2h1.500v7h-9V6zM4.500 6h3V4a1.500 1.500 0 0 0-3 0z" /></svg>
          <Url>demo.leadtools.com<span>/JavaScript/DocumentViewer/index.html</span></Url>
          <OmniActions>
            <svg width="16" height="16" viewBox="0 0 16 16" fill="none" stroke="#c4c7c5"><path d="M7 3H1.500v12h11V11M5 11c.5-4 3-6 6.500-6V2.500L15.500 6.500l-4 4V8C9 8 6.500 9 5 11z" /></svg>
            <svg width="16" height="16" viewBox="0 0 16 16" fill="none" stroke="#e0e2e4" strokeWidth="1.500"><path d="M8 1.800l1.900 4.100 4.500.5-3.300 3 .9 4.400L8 11.600l-4 2.200.9-4.400-3.300-3 4.500-.5z" /></svg>
          </OmniActions>
        </Omnibox>
        <Actions>
          <svg width="20" height="20" viewBox="0 0 20 20" fill="none" stroke="#f1f3f4" strokeWidth="2"><path d="M10 1v10M5.500 7l4.500 4.500L14.500 7M2 13v4h16v-4" /></svg>
          <svg width="20" height="20" viewBox="0 0 20 20"><rect x="2" y="3" width="15" height="14" fill="#f1f3f4" /><rect x="4" y="5" width="6" height="10" fill="#35363a" /></svg>
          <svg width="24" height="24" viewBox="0 0 24 24"><circle cx="12" cy="12" r="11" fill="#202124" /><circle cx="12" cy="9" r="3.500" fill="#f1f3f4" /><path d="M5.500 17.500c0-3 3-4.500 6.500-4.500s6.500 1.500 6.500 4.500z" fill="#f1f3f4" /></svg>
          <svg width="14" height="18" viewBox="0 0 14 18" fill="#e8eaed"><circle cx="8" cy="3" r="1.800" /><circle cx="8" cy="9" r="1.800" /><circle cx="8" cy="15" r="1.800" /></svg>
        </Actions>
      </NavBar>

      <MenuBar>
        {menus.map(m => (<MenuItem key={m}>{m}<Caret /></MenuItem>))}
      </MenuBar>
      <ToolBar>
        <Tool $w={32}><svg width="18" height="15" viewBox="0 0 18 15" fill="#4e6288"><path d="M0 7.500L8 0v4h10v7H8v4z" /></svg></Tool>
        <Tool $w={32} $ml={2}><svg width="18" height="15" viewBox="0 0 18 15" fill="#a8b2c4"><path d="M18 7.500L10 0v4H0v7h10v4z" /></svg></Tool>
        <PageInput>2</PageInput>
        <PageCount>/ 2</PageCount>
        <ToolSep $ml={22} />
        <Tool><ZoomGlass sign="minus" /></Tool>
        <ZoomSelect>111.3%<Chevron /></ZoomSelect>
        <Tool $w={32} $ml={15} $flat><ZoomGlass sign="plus" /></Tool>
        <ToolSep $ml={4} />
        <Tool><PageIcon>{Lines}</PageIcon></Tool>
        <Tool $ml={7}><PageIcon><path d="M11 8v8M7 12h8" stroke="#5a7ab8" strokeWidth={1.600} /></PageIcon></Tool>
        <Tool $ml={7}><PageIcon><path d="M7 13h8M7 13l2-2M7 13l2 2M15 13l-2-2M15 13l-2 2" stroke="#5a7ab8" strokeWidth={1.200} /></PageIcon></Tool>
        <ToolSep $ml={6} />
        <Tool $ml={1}><PageIcon>{Lines}</PageIcon></Tool>
        <Tool $ml={6}><svg width="18" height="19" viewBox="0 0 22 22" fill="#f4f5f8" stroke="#333" strokeWidth="1.600"><path d="M2 2h8v18H2zM12 2h8v18h-8z" /><path d="M4 6h4M4 9h4M14 6h4M14 9h4" stroke="#7f95b8" /></svg></Tool>
        <Tool $w={32} $ml={4} $on><svg width="19" height="20" viewBox="0 0 22 22" fill="none" stroke="#333" strokeWidth="1.800"><path d="M4 1v7h14V1M5 4h12" /><path d="M4 21v-9h9l5 5v4" /><path d="M13 12v5h5" /></svg></Tool>
        <Tool $ml={6}><svg width="20" height="19" viewBox="0 0 24 22" fill="#f4f5f8" stroke="#333" strokeWidth="1.600"><path d="M1 5h9v15H1zM14 2h9v18h-9z" /><path d="M3 9h5M3 12h5M3 15h5M16 6h6M16 10h6M16 14h6" /></svg></Tool>
        <ToolSep $ml={4} />
        <Tool $w={33} $on><ZoomGlass blue /></Tool>
        <Tool $ml={4}><svg width="18" height="20" viewBox="0 0 24 24" fill="#333"><path d="M7 3c1-1 2 0 2 1l1 7V2c0-1 2-1 2 0v9l1-10c0-1 2-1 2 0l-.5 10L17 4c.500-1 2-.5 2 .5L17 14c1-1 3-2 4-1l-4 7c-1 2-3 3-5 3-4 0-6-2-7-7z" /></svg></Tool>
        <Tool $ml={6}><svg width="18" height="19" viewBox="0 0 20 22"><rect x="2" y="2" width="16" height="19" fill="#f4f5f8" stroke="#333" strokeWidth="1.500" /><rect x="2" y="2" width="16" height="4" fill="#333" /><circle cx="9" cy="12" r="3.500" fill="#b9c8ea" stroke="#5a7ab8" strokeWidth="1.300" /><path d="M11.500 14.500l3 3" stroke="#5a7ab8" strokeWidth="1.500" /></svg></Tool>
        <Tool $ml={8}><svg width="18" height="18" viewBox="0 0 22 22" fill="none" stroke="#333"><circle cx="9" cy="9" r="6.500" strokeWidth="1.500" /><rect x="6" y="6" width="6" height="6" fill="#b9c8ea" stroke="#7f95b8" /><path d="M14 14l6 6" strokeWidth="3" /></svg></Tool>
        <Tool $ml={6}><svg width="20" height="20" viewBox="0 0 20 20"><text x="0" y="17" fontFamily='"Liberation Serif", serif' fontWeight="bold" fontSize="20" fill="#333">T</text><path d="M15.500 2v15" stroke="#5a7ab8" strokeWidth="1.200" /></svg></Tool>
        <ToolSep $ml={16} />
        <Tool $ml={15}><svg width="18" height="20" viewBox="0 0 20 22"><path d="M6 3h10v17H6z" fill="#aebbdd" /><path d="M3 1h9l3 3v15H3z" fill="#222" /><path d="M5 6h8M5 9h8M5 12h8M5 15h8" stroke="#aab" /><path d="M1 11l4-3v6z" fill="#4e6ab8" /></svg></Tool>
        <Tool $ml={6}><svg width="18" height="20" viewBox="0 0 20 22"><path d="M6 3h10v17H6z" fill="#c5cde0" /><path d="M3 1h9l3 3v15H3z" fill="#8a8a8a" /><path d="M5 6h8M5 9h8M5 12h8M5 15h8" stroke="#bbb" /><path d="M18 11l-4-3v6z" fill="#a8b8d8" /></svg></Tool>
      </ToolBar>

      <Main>
        <Rail>
          <RailActive>
            <svg width="24" height="23" viewBox="0 0 24 23">
              <rect width="24" height="23" rx="2" fill="#333" />
              <rect x="2" y="2" width="20" height="19" fill="#fff" />
              <rect x="3" y="3" width="8" height="7.500" fill="#8b9fd8" /><rect x="13" y="3" width="8" height="7.500" fill="#8b9fd8" />
              <rect x="3" y="12.500" width="8" height="7.500" fill="#8b9fd8" /><rect x="13" y="12.500" width="8" height="7.500" fill="#8b9fd8" />
            </svg>
          </RailActive>
          <RailIcon $mt={13}>
            <svg width="18" height="24" viewBox="0 0 18 24">
              <path d="M0 0h18v24l-9-6-9 6z" fill="#333" />
              <path d="M9 4l1.500 3.200 3.500.4-2.600 2.400.7 3.500L9 11.800l-3.100 1.700.7-3.500L4 7.600l3.500-.4z" fill="#6c84c8" />
            </svg>
          </RailIcon>
          <RailIcon $mt={21}>
            <svg width="18" height="24" viewBox="0 0 18 24">
              <path d="M0 0h18v24l-9-6-9 6z" fill="#979797" />
              <path d="M5 13l7-8c2-2 4 1 2 3l-6 7c-1 1-3 0-2-2l6-6" fill="none" stroke="#b9bcc4" strokeWidth="1.300" />
            </svg>
          </RailIcon>
          <RailIcon $mt={21}>
            <svg width="18" height="24" viewBox="0 0 18 24">
              <path d="M0 0h18v24l-9-6-9 6z" fill="#979797" />
              <path d="M4 15l3-5c1-3 6-5 7-3 1 3-3 7-6 7z" fill="#b9c4dc" />
            </svg>
          </RailIcon>
          <RailFoot>
            <svg width="24" height="24" viewBox="0 0 24 24">
              <path d="M3 14C0 6 6 0 12 1c3 .5 5 2 6 4" fill="none" stroke="#7e90cc" strokeWidth="1.600" />
              <path d="M0 17h7l-4 4z" fill="#7e90cc" transform="translate(1 -1)" />
              <path d="M16 7c5 0 8 3 8 7s-3 7-8 7c-2 0-3 0-4-1l-4 3 1-5c-1-1-2-3-2-4 0-4 4-7 9-7z" fill="#333" />
              <path d="M12 11h3v3l-2 3h-1l1-3h-1zM18 11h3v3l-2 3h-1l1-3h-1z" fill="#fff" />
            </svg>
          </RailFoot>
        </Rail>
        <Panel>
          <PanelTitle>Pages</PanelTitle>
          <ThumbList>
            <ThumbCard>
              <ThumbFrame><ThumbOne /></ThumbFrame>
              <ThumbLabel>Page 1</ThumbLabel>
            </ThumbCard>
            <ThumbCard $on $mt={6}>
              <ThumbFrame><ThumbTwo /></ThumbFrame>
              <ThumbLabel>Page 2</ThumbLabel>
            </ThumbCard>
          </ThumbList>
        </Panel>
        <Viewer>
          <EdgeLeft />
          <PageSheet>
            <Doc>
              <Title>Your Portfolio Overview</Title>
              <Rule $mt={25} />
              <Heading>Assets</Heading>
              <HeadRow>
                <HeadAccount>Account<span>(Account Number)</span></HeadAccount>
                <HeadCol>Percent<br />of total</HeadCol>
                <HeadCol>Balance last<br />month ($)</HeadCol>
                <HeadCol>Balance this<br />month ($)</HeadCol>
                <HeadCol>Increase/<br />decrease ($)</HeadCol>
                <HeadCol>Percent<br />change</HeadCol>
              </HeadRow>
              <AssetsBody>
                <AccountList>
                  {accounts.map((a, i) => (
                    <AccountRow key={i} $mt={a.mt}>
                      <AccountName $w={a.w} $wide={a.wide}>{a.name}{a.star && <Star $ml={a.ml}>✻</Star>}</AccountName>
                      <Redact $w={a.bar} />
                    </AccountRow>
                  ))}
                </AccountList>
                <NumbersCol>
                  <NumGrid>
                    {numbers.flat().map((n, i) => (<div key={i}>{n}</div>))}
                  </NumGrid>
                  <Rule $h={3} $c="#111" />
                  <TotalRow>
                    <div>Total assets</div>
                    <TotalBar $w={66} />
                    <TotalBar $w={66} />
                    <TotalBar $w={59} />
                    <TotalPct>(2.20)%</TotalPct>
                  </TotalRow>
                  <NoteWrap>
                    <NoteStar>✻</NoteStar>
                    <NoteBox>
                      <NoteTitle>Investment and Insurance Products:</NoteTitle>
                      <NoteLine><Gt />Are&nbsp;<b>NOT</b>&nbsp;insured by the FDIC or any other federal government agency</NoteLine>
                      <NoteLine><Gt />Are&nbsp;<b>NOT</b>&nbsp;deposits of or guaranteed by the Bank or any Bank affiliate</NoteLine>
                      <NoteLine><Gt /><b>MAY</b>&nbsp;Lose Value</NoteLine>
                    </NoteBox>
                  </NoteWrap>
                </NumbersCol>
              </AssetsBody>
              <AllocRow>
                <AllocCol $w={294}>
                  <AllocTitle>Total asset allocation (by account type)</AllocTitle>
                  <ChartSvg width="294" height="138" viewBox="0 0 294 138">
                    <Dots id="dotsA" />
                    <path d="M80.500 68v16a53.500 22 0 0 0 107 0V68z" fill="url(#dotsA)" stroke="#222" />
                    <ellipse cx="134" cy="68" rx="53.500" ry="22" fill="#fff" stroke="#222" />
                    <path d="M134 68l1-21h-2z" fill="#fff" stroke="#fff" />
                    <path d="M134 68l.5-22M134 68l5-22" stroke="#333" />
                    <path d="M135 36v13l4 0 3-13z" fill="#fff" stroke="#222" />
                    <path d="M139 49l2-12" stroke="#888" strokeWidth="2" />
                    <path d="M134 90v16" stroke="#222" />
                    <path d="M134 106v5" stroke="#777" />
                    <path d="M139 35l3-5" stroke="#777" />
                    <Lbl x="139" y="30">Checking/ Prepaid: 2%</Lbl>
                    <Lbl x="65" y="114">Investment: 98%</Lbl>
                  </ChartSvg>
                </AllocCol>
                <AllocCol $w={454}>
                  <AllocTitle>Total asset allocation (by Retirement and Non-Retirement)</AllocTitle>
                  <ChartSvg width="454" height="138" viewBox="0 0 454 138">
                    <Dots id="dotsB" />
                    <path d="M69 66v12a54 22 0 0 0 94 15V80a54 22 0 0 1-94-14z" fill="url(#dotsB)" stroke="#222" />
                    <path d="M123 44a54 22 0 1 0 40 36L123 66z" fill="#fff" stroke="#222" />
                    <path d="M145 61v14l42 15V73z" fill="url(#dotsB)" stroke="#222" />
                    <path d="M187 73v15c8-6 12-16 12-24V57c0 6-5 12-12 16z" fill="url(#dotsB)" stroke="#222" />
                    <path d="M145 39v22l42 12a54 22 0 0 0-42-34z" fill="#fff" stroke="#222" />
                    <path d="M199 53l7-3M69 85l-10 5" stroke="#555" />
                    <Lbl x="203" y="37">Retirement:</Lbl>
                    <Lbl x="205" y="48">36%</Lbl>
                    <Lbl x="0" y="89">Non-Retirement:</Lbl>
                    <Lbl x="1" y="101">64%</Lbl>
                  </ChartSvg>
                </AllocCol>
              </AllocRow>
              <Rule $c="#777" $h={1} />
              <RetireRow>
                <RetireChart>
                  <ChartSvg width="301" height="116" viewBox="0 0 301 116">
                    <Dots id="dotsC" />
                    <path d="M81 60v13a53.500 22 0 0 0 107 0V60z" fill="url(#dotsC)" stroke="#222" />
                    <ellipse cx="134.500" cy="60" rx="53.500" ry="22" fill="#fff" stroke="#222" />
                    <path d="M129 23l1 16 4 21 2-18z" fill="#fff" stroke="#222" />
                    <path d="M134 82v16" stroke="#222" />
                    <Lbl x="27" y="21">Funds - Retirement: 2%</Lbl>
                    <Lbl x="140" y="106">Retirement Brokerage: 98%</Lbl>
                  </ChartSvg>
                </RetireChart>
                <RetireBody>
                  <RetireTitle>Retirement assets</RetireTitle>
                  <RetireHead>
                    <BigAccount>Account</BigAccount>
                    <AcctNo>(Account Number)</AcctNo>
                    <HeadCol>Percent<br />of total</HeadCol>
                    <HeadCol>Balance last<br />month ($)</HeadCol>
                    <HeadCol>Balance this<br />month ($)</HeadCol>
                  </RetireHead>
                  <RetireGrid>
                    {retire.map((r, i) => (
                      <React.Fragment key={i}>
                        <LeftCell>{r[0]}</LeftCell>
                        <Redact $w={r[1]} />
                        <Cell>{r[2]}</Cell>
                        <Cell>{r[3]}</Cell>
                        <Cell>{r[4]}</Cell>
                      </React.Fragment>
                    ))}
                  </RetireGrid>
                  <Rule $mt={8} $h={3} $c="#000" />
                  <RetireTotal>
                    <div>Total retirement assets</div>
                    <Cell>$614,870.06</Cell>
                    <Cell>$624,411.92</Cell>
                  </RetireTotal>
                </RetireBody>
              </RetireRow>
              <Rule $mt={14} $c="#777" />
              <IncomeTitle>Interest, dividends and other income</IncomeTitle>
              <IncomeBlock>
                <IncomeNote>The information below should not be used for tax planning purposes.</IncomeNote>
                <IncomeHead><div>Account</div><div>This month</div><div>This year</div></IncomeHead>
                <IncomeRow>
                  <IncomeName><IncomeLabel>Portfolio Checking</IncomeLabel><Redact $w={52} /></IncomeName>
                  <div>0.62</div><div>1.30</div>
                </IncomeRow>
                <IncomeRow>
                  <IncomeName><IncomeLabel>Crown Banking</IncomeLabel><Redact $w={65} /></IncomeName>
                  <div>26.65</div><div>56.10</div>
                </IncomeRow>
              </IncomeBlock>
            </Doc>
          </PageSheet>
          <EdgeRight />
          <Scrollbar>
            <ArrowUp />
            <ScrollThumb />
            <ArrowDown />
          </Scrollbar>
        </Viewer>
      </Main>

      <BottomBar>
        {bottomIcons.map((icon, i) => (<React.Fragment key={i}>{icon}</React.Fragment>))}
      </BottomBar>
    </AppRoot>
  );
}
